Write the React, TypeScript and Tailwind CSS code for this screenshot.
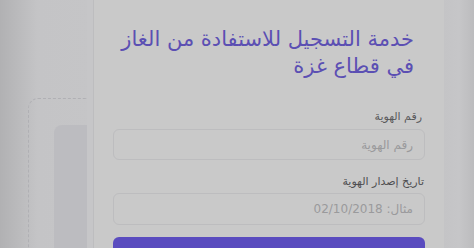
import React from "react";

export default function App() {
  return (
    <div
      className="w-[474px] h-[248px] overflow-hidden flex bg-[#c5c5c7]"
      style={{ fontFamily: '"DejaVu Sans", "Noto Sans", sans-serif' }}
    >
      {/* left decorative background */}
      <div className="w-[93px] shrink-0 flex bg-gradient-to-r from-[#b1b1b3] via-[#c4c4c6] via-40% to-[#c5c5c7]">
        <div className="flex-1 pl-[28px] pt-[98px] flex">
          <div className="flex-1 rounded-tl-[10px] border-l-[1.5px] border-t-[1.5px] border-dashed border-[#b0b0b4] pl-[25px] pt-[26px] flex">
            <div className="flex-1 rounded-tl-[8px] bg-[#bcbcc0]" />
          </div>
        </div>
        <div className="w-[6px] bg-[#c6c6c8]" />
      </div>

      <div
        dir="rtl"
        className="w-[351px] shrink-0 bg-[#c9c9c9] border-l border-[#bdbdbf] px-[19px] pt-[26px]"
      >
        <h1 className="text-[#5b4fb3] text-[21px] leading-[27px] font-medium pr-[11px] text-right">
          خدمة التسجيل للاستفادة من الغاز
          <br />
          في قطاع غزة
        </h1>

        <div className="mt-[29px] pr-[3px] text-[11px] leading-[16px] text-[#5a5a5c]">رقم الهوية</div>
        <div className="mt-[4px] h-[31px] rounded-[6px] border border-[#bdbdbf] flex items-center pr-[11px] text-[12px] text-[#9a9a9c]">
          رقم الهوية
        </div>

        <div className="mt-[14px] pr-[1px] text-[11px] leading-[16px] text-[#4f4f51]">تاريخ إصدار الهوية</div>
        <div className="mt-[3px] h-[32px] rounded-[6px] border border-[#bdbdbf] flex items-center pr-[11px] text-[12px] text-[#9a9a9c]">
          مثال: 02/10/2018
        </div>

        <div className="mt-[12px] h-[30px] rounded-[6px] bg-[#5a4cbf]" />
      </div>
      <div className="flex-1 bg-gradient-to-r from-[#c4c4c6] via-[#c6c6c8] to-[#bcbcbe]" />
    </div>
  );
}
